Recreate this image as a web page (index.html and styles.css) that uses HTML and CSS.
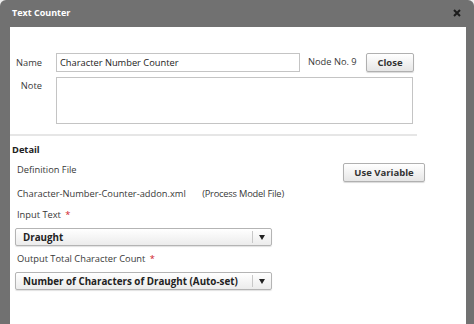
FILE: index.html
```html
<!DOCTYPE html>
<html lang="en">
<head>
  <meta charset="UTF-8">
  <meta name="viewport" content="width=device-width, initial-scale=1.0">
  <title>Text Counter</title>
  <link rel="stylesheet" href="styles.css">
</head>
<body>

  <div class="window">
    <div class="titlebar">
      <span class="title">Text Counter</span>
      <svg class="close-x" width="8" height="8" viewBox="0 0 8 8">
        <path d="M1 1 L7 7 M7 1 L1 7" stroke="#1c1c1c" stroke-width="2" fill="none"/>
      </svg>
    </div>

    <div class="content">
      <div class="row name-row">
        <label class="label">Name</label>
        <div class="input">Character Number Counter</div>
        <span class="node">Node No. 9</span>
        <button class="btn btn-close">Close</button>
      </div>

      <div class="row note-row">
        <label class="label">Note</label>
        <div class="textarea"></div>
      </div>

      <div class="divider"></div>

      <div class="detail">
        <div class="detail-title">Detail</div>

        <div class="def-row">
          <span class="text">Definition File</span>
          <button class="btn btn-var">Use Variable</button>
        </div>

        <div class="text file-row">Character-Number-Counter-addon.xml <span class="file-type">(Process Model File)</span></div>

        <div class="text field-label">Input Text <span class="req">*</span></div>
        <div class="select">
          <span class="select-value">Draught</span>
          <span class="select-arrow"></span>
        </div>

        <div class="text field-label">Output Total Character Count <span class="req">*</span></div>
        <div class="select">
          <span class="select-value">Number of Characters of Draught (Auto-set)</span>
          <span class="select-arrow"></span>
        </div>
      </div>
    </div>
  </div>

</body>
</html>
```

FILE: styles.css
```css
body {
  margin: 0;
  background: #eeeeee;
  font-family: 'Open Sans', 'Noto Sans', sans-serif;
  font-size: 9.3px;
  color: #383838;
  height: 324px;
  overflow: hidden;
}

.window {
  background: #717171;
  border-radius: 6px 6px 0 0;
  height: 324px;
  display: flex;
  flex-direction: column;
}

.titlebar {
  height: 27px;
  display: flex;
  align-items: center;
  justify-content: space-between;
  padding: 0 12px;
  flex-shrink: 0;
}

.title {
  color: #fff;
  font-weight: bold;
  font-size: 9px;
  margin-top: -2px;
}

.close-x {
  margin-right: 1px;
  margin-top: -1px;
}

.content {
  background: #fff;
  margin: 0 8px 0 10px;
  flex: 1;
  padding-top: 26px;
}

.row {
  display: flex;
}

.name-row {
  align-items: center;
  height: 19px;
}

.label {
  width: 32px;
  text-align: right;
  margin-right: 14px;
}

.input {
  width: 239px;
  height: 17px;
  line-height: 17px;
  border: 1px solid #c4c4c4;
  padding-left: 3px;
  color: #222;
}

.node {
  margin-left: 8px;
  width: 58px;
  margin-top: -2px;
}

.btn {
  font-family: 'Open Sans', 'Noto Sans', sans-serif;
  font-weight: bold;
  font-size: 9.5px;
  color: #333;
  background: linear-gradient(#ffffff, #e6e6e6);
  border: 1px solid #b0b0b0;
  border-radius: 2px;
  box-shadow: 0 1px 1px rgba(0, 0, 0, 0.15);
  padding: 0;
  height: 19px;
}

.btn-close {
  width: 48px;
}

.note-row {
  margin-top: 5px;
}

.note-row .label {
  padding-top: 2px;
}

.textarea {
  width: 355px;
  height: 45px;
  border: 1px solid #c4c4c4;
}

.divider {
  margin-top: 10px;
  width: 407px;
  height: 2px;
  background: #e6e6e6;
}

.detail {
  padding-left: 2px;
}

.detail-title {
  margin-top: 7px;
  line-height: 14px;
  font-weight: bold;
  color: #222;
}

.text {
  line-height: 14px;
  padding-left: 5px;
}

.def-row {
  margin-top: 6px;
  display: flex;
  justify-content: space-between;
  width: 413px;
}

.btn-var {
  width: 82px;
}

.file-row {
  margin-top: 5px;
}

.file-type {
  margin-left: 14px;
  letter-spacing: -0.2px;
}

.field-label {
  margin-top: 7px;
}

.req {
  color: #d0202a;
  margin-left: 2px;
}

.select {
  margin: 6px 0 0 3px;
  width: 255px;
  height: 16px;
  border: 1px solid #b4b4b4;
  border-radius: 2px;
  background: linear-gradient(#ffffff, #ececec);
  box-shadow: 0 1px 1px rgba(0, 0, 0, 0.12);
  display: flex;
  align-items: center;
  justify-content: space-between;
}

.select + .field-label {
  margin-top: 6px;
}

.select-value {
  font-weight: bold;
  font-size: 9.8px;
  color: #222;
  padding-left: 7px;
}

.select-arrow {
  width: 18px;
  height: 12px;
  border-left: 1px solid #c8c8c8;
  display: flex;
  align-items: center;
  justify-content: center;
}

.select-arrow::after {
  content: "";
  border-left: 3px solid transparent;
  border-right: 3px solid transparent;
  border-top: 5px solid #222;
}
```
